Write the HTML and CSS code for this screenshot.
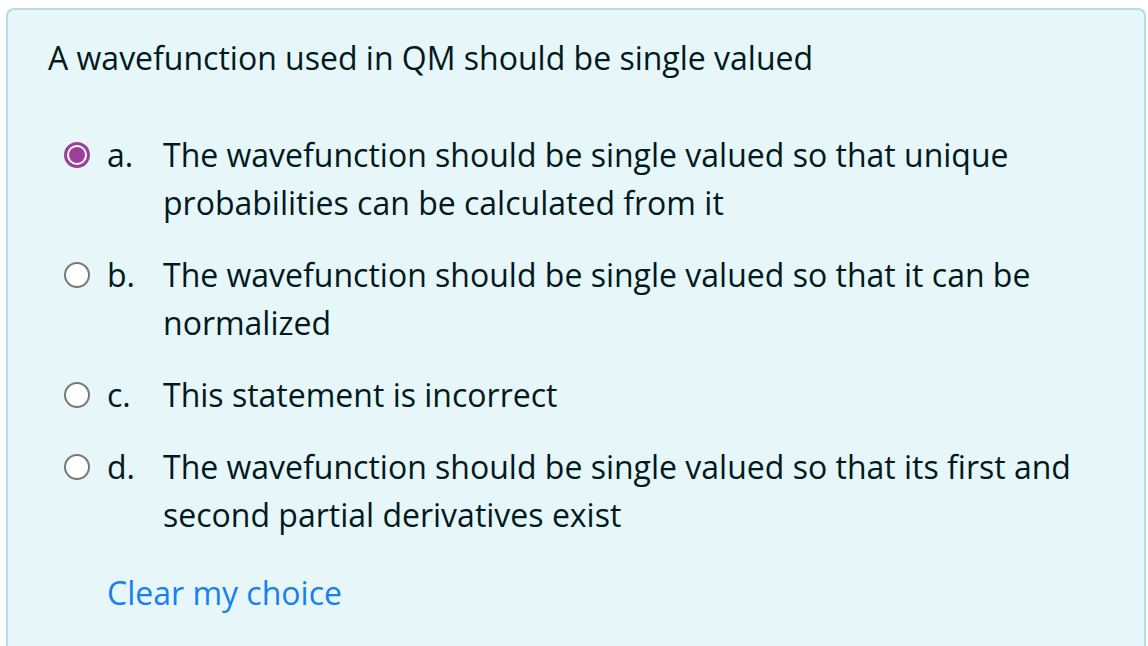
FILE: index.html
```html
<!DOCTYPE html>
<html>
<head>
<meta charset="utf-8">
<link rel="stylesheet" href="styles.css">
</head>
<body>
<div class="formulation">
  <div class="qtext">A wavefunction used in QM should be single valued</div>
  <div class="answers">
    <div class="option">
      <span class="radio checked"><span class="dot"></span></span>
      <span class="letter">a.</span>
      <span class="text">The wavefunction should be single valued so that unique probabilities can be calculated from it</span>
    </div>
    <div class="option">
      <span class="radio"></span>
      <span class="letter">b.</span>
      <span class="text">The wavefunction should be single valued so that it can be normalized</span>
    </div>
    <div class="option">
      <span class="radio"></span>
      <span class="letter">c.</span>
      <span class="text">This statement is incorrect</span>
    </div>
    <div class="option">
      <span class="radio"></span>
      <span class="letter">d.</span>
      <span class="text">The wavefunction should be single valued so that its first and second partial derivatives exist</span>
    </div>
  </div>
  <a class="clear" href="#">Clear my choice</a>
</div>
</body>
</html>
```

FILE: styles.css
```css
html, body {
  margin: 0;
  padding: 0;
  background: #ffffff;
  overflow: hidden;
}

body {
  font-family: "Open Sans", "Noto Sans", sans-serif;
  color: #001a1e;
}

.formulation {
  box-sizing: border-box;
  margin: 8px 0 0 6px;
  width: 1140px;
  height: 700px;
  background: #e7f6f8;
  border: 2px solid #b8dde4;
  border-bottom: none;
  border-radius: 8px 8px 0 0;
  padding: 24px 30px 0 40px;
  display: flex;
  flex-direction: column;
  align-items: flex-start;
}

.qtext {
  font-size: 32px;
  line-height: 48px;
}

.answers {
  margin-top: 37px;
  display: flex;
  flex-direction: column;
}

.option {
  display: flex;
  align-items: flex-start;
  padding: 12px 0;
  font-size: 32px;
  line-height: 48px;
}

.radio {
  box-sizing: border-box;
  flex: none;
  width: 26px;
  height: 26px;
  margin: 11px 0 0 16px;
  border-radius: 50%;
  border: 2px solid #787878;
  background: #ffffff;
  display: flex;
  align-items: center;
  justify-content: center;
}

.radio.checked {
  border: 3px solid #9b3f9b;
}

.radio.checked .dot {
  width: 16px;
  height: 16px;
  border-radius: 50%;
  background: #9b3f9b;
}

.letter {
  flex: none;
  width: 56px;
  margin-left: 17px;
}

.text {
  flex: 1;
  max-width: 950px;
}

.clear {
  margin: 18px 0 0 59px;
  font-size: 32px;
  line-height: 48px;
  color: #1580f2;
  text-decoration: none;
}
```
